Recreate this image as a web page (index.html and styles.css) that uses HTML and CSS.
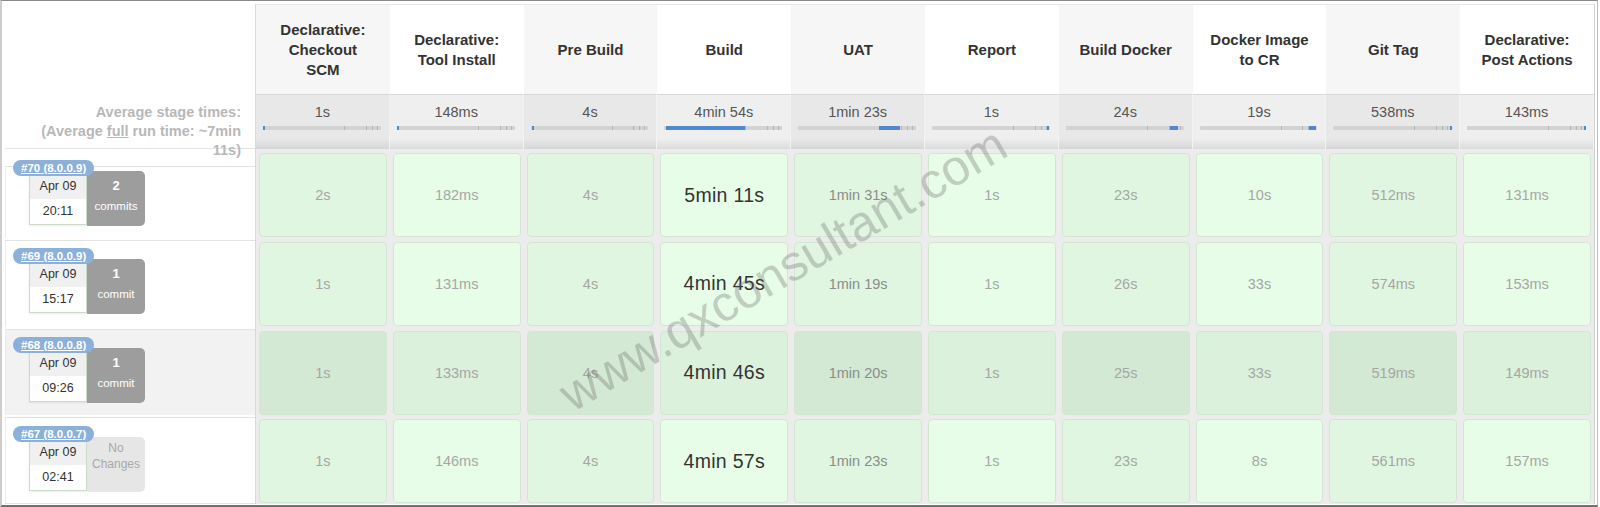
FILE: index.html
```html
<!DOCTYPE html>
<html lang="en">
<head>
<meta charset="utf-8">
<title>Stage View</title>
<link rel="stylesheet" href="styles.css">
</head>
<body>
<div class="frame">
  <div class="left">
    <div class="left-head"></div>
    <div class="avg-label">Average stage times:<br>(Average <u>full</u> run time: ~7min 11s)</div>

    <div class="run-row first">
      <a class="badge">#70 (8.0.0.9)</a>
      <div class="run-cell">
        <div class="run-info">
          <div class="date"><div class="date-day">Apr 09</div><div class="date-time">20:11</div></div>
          <div class="changes"><div class="changes-count">2</div><div class="changes-label">commits</div></div>
        </div>
      </div>
    </div>

    <div class="run-row">
      <a class="badge">#69 (8.0.0.9)</a>
      <div class="run-cell">
        <div class="run-info">
          <div class="date"><div class="date-day">Apr 09</div><div class="date-time">15:17</div></div>
          <div class="changes"><div class="changes-count">1</div><div class="changes-label">commit</div></div>
        </div>
      </div>
    </div>

    <div class="run-row hl">
      <a class="badge">#68 (8.0.0.8)</a>
      <div class="run-cell">
        <div class="run-info">
          <div class="date"><div class="date-day">Apr 09</div><div class="date-time">09:26</div></div>
          <div class="changes"><div class="changes-count">1</div><div class="changes-label">commit</div></div>
        </div>
      </div>
    </div>

    <div class="run-row last">
      <a class="badge">#67 (8.0.0.7)</a>
      <div class="run-cell">
        <div class="run-info">
          <div class="date"><div class="date-day">Apr 09</div><div class="date-time">02:41</div></div>
          <div class="changes none"><div>No</div><div>Changes</div></div>
        </div>
      </div>
    </div>
  </div>

  <div class="stages">
    <div class="stage-name">Declarative: Checkout SCM</div>
    <div class="stage-name">Declarative: Tool Install</div>
    <div class="stage-name">Pre Build</div>
    <div class="stage-name">Build</div>
    <div class="stage-name">UAT</div>
    <div class="stage-name">Report</div>
    <div class="stage-name">Build Docker</div>
    <div class="stage-name">Docker Image to CR</div>
    <div class="stage-name">Git Tag</div>
    <div class="stage-name">Declarative: Post Actions</div>

    <div class="avg">1s<div class="bar"><span class="bar-fill" style="left:0;width:2px"></span></div></div>
    <div class="avg">148ms<div class="bar"><span class="bar-fill" style="left:0.5%;width:2px"></span></div></div>
    <div class="avg">4s<div class="bar"><span class="bar-fill" style="left:0.8%;width:2px"></span></div></div>
    <div class="avg">4min 54s<div class="bar"><span class="bar-fill" style="left:1.2%;width:67.5%"></span></div></div>
    <div class="avg">1min 23s<div class="bar"><span class="bar-fill" style="left:68.7%;width:18%"></span></div></div>
    <div class="avg">1s<div class="bar"><span class="bar-fill" style="left:98%;width:2px"></span></div></div>
    <div class="avg">24s<div class="bar"><span class="bar-fill" style="left:88.5%;width:6.5%"></span></div></div>
    <div class="avg">19s<div class="bar"><span class="bar-fill" style="left:93%;width:5.5%"></span></div></div>
    <div class="avg">538ms<div class="bar"><span class="bar-fill" style="left:98.6%;width:2px"></span></div></div>
    <div class="avg">143ms<div class="bar"><span class="bar-fill" style="left:99%;width:2px"></span></div></div>

    <div class="cell">2s</div>
    <div class="cell">182ms</div>
    <div class="cell">4s</div>
    <div class="cell long">5min 11s</div>
    <div class="cell mid">1min 31s</div>
    <div class="cell">1s</div>
    <div class="cell">23s</div>
    <div class="cell">10s</div>
    <div class="cell">512ms</div>
    <div class="cell">131ms</div>

    <div class="cell">1s</div>
    <div class="cell">131ms</div>
    <div class="cell">4s</div>
    <div class="cell long">4min 45s</div>
    <div class="cell mid">1min 19s</div>
    <div class="cell">1s</div>
    <div class="cell">26s</div>
    <div class="cell">33s</div>
    <div class="cell">574ms</div>
    <div class="cell">153ms</div>

    <div class="cell hl">1s</div>
    <div class="cell hl">133ms</div>
    <div class="cell hl">4s</div>
    <div class="cell hl long">4min 46s</div>
    <div class="cell hl mid">1min 20s</div>
    <div class="cell hl">1s</div>
    <div class="cell hl">25s</div>
    <div class="cell hl">33s</div>
    <div class="cell hl">519ms</div>
    <div class="cell hl">149ms</div>

    <div class="cell">1s</div>
    <div class="cell">146ms</div>
    <div class="cell">4s</div>
    <div class="cell long">4min 57s</div>
    <div class="cell mid">1min 23s</div>
    <div class="cell">1s</div>
    <div class="cell">23s</div>
    <div class="cell">8s</div>
    <div class="cell">561ms</div>
    <div class="cell">157ms</div>
  </div>

  <div class="watermark">www.qxconsultant.com</div>
</div>
</body>
</html>
```

FILE: styles.css
```css
* { box-sizing: border-box; }

html, body {
  margin: 0;
  padding: 0;
  background: #ffffff;
}

body {
  width: 1600px;
  height: 507px;
  overflow: hidden;
  font-family: "Liberation Sans", Arial, Helvetica, sans-serif;
}

.frame {
  position: relative;
  width: 1598px;
  height: 507px;
  border-top: 1px solid #8a8a8a;
  border-left: 2px solid #cdcdcd;
  border-right: 1px solid #bcbcbc;
  border-bottom: 2px solid #727272;
  padding-top: 3px;
  display: flex;
  align-items: flex-start;
  overflow: hidden;
}

/* ---------- left column ---------- */
.left {
  width: 253px;
  flex: none;
  display: flex;
  flex-direction: column;
}

.left-head { height: 90px; flex: none; }

.avg-label {
  flex: none;
  height: 55px;
  margin-left: 3px;
  border-bottom: 1px solid #e2e2e2;
  padding: 8.5px 14px 0 26px;
  text-align: right;
  font-weight: bold;
  font-size: 14.5px;
  line-height: 19px;
  color: #b8b8b8;
  position: relative;
  z-index: 2;
}

.avg-label u { text-decoration: underline; }

.run-row {
  flex: none;
  height: 88.75px;
  position: relative;
}

.run-cell {
  margin: 2px 0 0 3px;
  height: calc(100% - 2px);
  border-top: 1px solid #e3e3e3;
  border-left: 1px solid #ececec;
  padding: 18.5px 0 0 23px;
  background: #ffffff;
}

.run-row.first .run-cell {
  margin-top: 17px;
  height: calc(100% - 17px);
  padding-top: 3.5px;
}

.run-row.hl .run-cell { background: #f2f2f2; }
.run-row.last .run-cell { border-bottom: 1px solid #e3e3e3; }

.badge {
  position: absolute;
  top: 10.5px;
  left: 11px;
  z-index: 3;
  height: 16px;
  padding: 0 8px;
  border-radius: 8px;
  background: #8bb0da;
  color: #ffffff;
  font-size: 11.5px;
  font-weight: bold;
  line-height: 16px;
  text-decoration: underline;
  white-space: nowrap;
}

.run-info {
  display: flex;
  align-items: center;
  height: 55px;
}

.date {
  width: 58px;
  height: 53px;
  border: 1px solid #c8dcc8;
  box-shadow: 0 1px 2px rgba(0, 0, 0, 0.08);
  background: #ffffff;
  font-size: 12.5px;
  color: #333333;
  text-align: center;
}

.date-day {
  height: 26px;
  line-height: 26px;
  background: #f0f0f0;
}

.date-time { line-height: 25px; }

.changes {
  width: 58px;
  height: 55px;
  border-radius: 0 5px 5px 0;
  background: #9d9d9d;
  color: #ffffff;
  text-align: center;
  padding-top: 5px;
}

.changes-count {
  font-weight: bold;
  font-size: 13px;
  line-height: 20px;
}

.changes-label {
  font-size: 11.5px;
  line-height: 20px;
}

.changes.none {
  background: #e6e6e6;
  color: #a9a9a9;
  padding-top: 3px;
  font-size: 12px;
  line-height: 16px;
}

/* ---------- stages ---------- */
.stages {
  width: 1340px;
  height: 500px;
  flex: none;
  border-top: 1px solid #e4e4e4;
  border-left: 1px solid #d9d9d9;
  border-right: 1px solid #d0d0d0;
  display: grid;
  grid-template-columns: repeat(10, 1fr);
  grid-template-rows: 89px 55px repeat(4, 88.75px);
  background: #ececec;
}

.stage-name {
  display: flex;
  align-items: center;
  justify-content: center;
  text-align: center;
  padding: 0 16px;
  font-weight: bold;
  font-size: 15px;
  line-height: 20px;
  color: #333333;
  background: #ffffff;
}

.stages > .stage-name:nth-child(odd) { background: #f6f6f6; }

.avg {
  border-top: 1px solid #d8d8d8;
  border-right: 1px solid #f3f3f3;
  padding-top: 7px;
  text-align: center;
  font-size: 14.5px;
  line-height: 20px;
  color: #555555;
  background: linear-gradient(#efefef 80%, #dcdcdc);
}

.stages > .avg:nth-child(odd) { background: linear-gradient(#e8e8e8 80%, #d6d6d6); }

.bar {
  position: relative;
  height: 4px;
  margin: 4px 8px 0 7px;
  border-radius: 1px;
  background: linear-gradient(90deg,
    #d3d3d3 69%, #b4b4b4 69%, #b4b4b4 calc(69% + 1px), #d3d3d3 calc(69% + 1px),
    #d3d3d3 87%, #b4b4b4 87%, #b4b4b4 calc(87% + 1px), #d3d3d3 calc(87% + 1px),
    #d3d3d3 92%, #b4b4b4 92%, #b4b4b4 calc(92% + 1px), #d3d3d3 calc(92% + 1px),
    #d3d3d3 97%, #b4b4b4 97%, #b4b4b4 calc(97% + 1px), #d3d3d3 calc(97% + 1px));
}

.bar-fill {
  position: absolute;
  top: 0;
  bottom: 0;
  background: #5088d0;
}

.cell {
  margin: 4px 3px 0;
  height: 84px;
  border: 1px solid #d3e6d3;
  border-radius: 4px;
  display: flex;
  align-items: center;
  justify-content: center;
  font-size: 14.5px;
  color: #a6a6a6;
  background: #e7fde7;
}

.stages > .cell:nth-child(odd) { background: #e0f6e0; }
.cell.hl { background: #dbf1db; }
.stages > .cell.hl:nth-child(odd) { background: #d3e9d3; }

.cell.long {
  font-size: 19.5px;
  color: #333333;
  letter-spacing: 0.3px;
}

.cell.mid { color: #8c8c8c; }

/* ---------- watermark ---------- */
.watermark {
  position: absolute;
  left: 781px;
  top: 268px;
  transform: translate(-50%, -50%) rotate(-30.5deg);
  font-size: 50px;
  line-height: 1;
  white-space: nowrap;
  color: rgba(100, 100, 100, 0.3);
  pointer-events: none;
  z-index: 5;
}
```
